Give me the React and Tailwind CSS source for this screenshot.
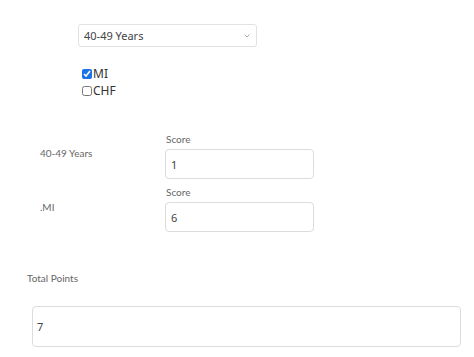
import React, { useState } from "react";

const label = "text-[10px] text-[#666] font-['Lato',sans-serif]";
const input =
  "h-[30px] w-[149px] rounded-[4px] border border-[#dcdcdc] bg-white px-[5px] text-[11px] text-[#444] font-['Noto_Sans',sans-serif] outline-none";

const App = () => {
  const [mi, setMi] = useState(true);
  const [chf, setChf] = useState(false);

  return (
    <div className="h-[357px] w-[474px] bg-white">
      {/* Age select */}
      <div className="pl-[78px] pt-[24px]">
        <div className="flex h-[23px] w-[179px] items-center justify-between rounded-[3px] border border-[#e2e2e2] bg-white pl-[5px] pr-[6px] text-[11px] leading-none text-[#444] font-['Noto_Sans',sans-serif]">
          <span>40-49 Years</span>
          <svg width="6" height="4" viewBox="0 0 6 4">
            <path d="M0.5 0.5 L3 3 L5.5 0.5" fill="none" stroke="#aaa" strokeWidth="1" />
          </svg>
        </div>
      </div>

      {/* Conditions */}
      <div className="mt-[19px] flex flex-col gap-[1px] pl-[82px] font-['Noto_Sans',sans-serif] text-[12px] leading-[16px] text-[#333]">
        <label className="flex items-center">
          <input
            type="checkbox"
            checked={mi}
            onChange={() => setMi(!mi)}
            className="m-0 mr-[1px] h-[10px] w-[10px] accent-[#1a73e8]"
          />
          MI
        </label>
        <label className="flex items-center">
          <input
            type="checkbox"
            checked={chf}
            onChange={() => setChf(!chf)}
            className="m-0 mr-[1px] h-[10px] w-[10px]"
          />
          CHF
        </label>
      </div>

      {/* Scores */}
      <div className="mt-[33px] flex flex-col gap-[6px] pl-[40px]">
        <div className="flex items-end">
          <div className={`${label} mb-[18px] w-[125px]`}>40-49 Years</div>
          <div className="flex flex-col">
            <span className={`${label} mb-[2px] pl-[1px]`}>Score</span>
            <input readOnly value="1" className={input} />
          </div>
        </div>
        <div className="flex items-end">
          <div className={`${label} mb-[17px] w-[125px]`}>.MI</div>
          <div className="flex flex-col">
            <span className={`${label} mb-[2px] pl-[1px]`}>Score</span>
            <input readOnly value="6" className={input} />
          </div>
        </div>
      </div>

      {/* Total */}
      <div className="mt-[39px] pl-[27px]">
        <div className={label}>Total Points</div>
        <input
          readOnly
          value="7"
          className="mt-[20px] ml-[5px] h-[41px] w-[429px] rounded-[4px] border border-[#dcdcdc] bg-white px-[4px] text-[11px] text-[#444] font-['Noto_Sans',sans-serif] outline-none"
        />
      </div>
    </div>
  );
};

export default App;
